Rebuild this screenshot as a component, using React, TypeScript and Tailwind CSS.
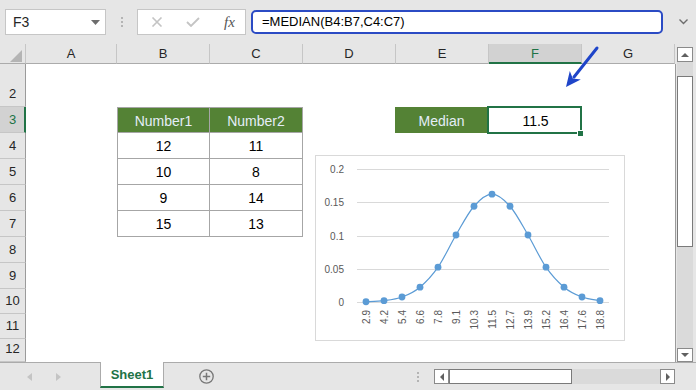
import React from 'react'

const cols = [
  { id: 'A', w: 'w-[91px]' },
  { id: 'B', w: 'w-[93px]' },
  { id: 'C', w: 'w-[93px]' },
  { id: 'D', w: 'w-[93px]' },
  { id: 'E', w: 'w-[93px]' },
  { id: 'F', w: 'w-[93px]' },
  { id: 'G', w: 'w-[93px]' },
]

const rows = [
  { n: 2, h: 'h-[43px]' },
  { n: 3, h: 'h-[26px]' },
  { n: 4, h: 'h-[26px]' },
  { n: 5, h: 'h-[26px]' },
  { n: 6, h: 'h-[26px]' },
  { n: 7, h: 'h-[26px]' },
  { n: 8, h: 'h-[26px]' },
  { n: 9, h: 'h-[26px]' },
  { n: 10, h: 'h-[25px]' },
  { n: 11, h: 'h-[25px]' },
  { n: 12, h: 'h-[23px]' },
]

const data: Record<number, [string, string]> = {
  4: ['12', '11'],
  5: ['10', '8'],
  6: ['9', '14'],
  7: ['15', '13'],
}

// chart series: normal curve around the median
const xs = [2.9, 4.2, 5.4, 6.6, 7.8, 9.1, 10.3, 11.5, 12.7, 13.9, 15.2, 16.4, 17.6, 18.8]
const sd = 2.46
const pdf = (x: number) => Math.exp(-((x - 11.5) ** 2) / (2 * sd * sd)) / (sd * Math.sqrt(2 * Math.PI))
const yOf = (v: number) => 146 - (v / 0.2) * 133
const pts = xs.map((x, i) => [50 + i * 18, yOf(pdf(x))])

function smoothPath(p: number[][]) {
  let d = `M${p[0][0]} ${p[0][1]}`
  for (let i = 0; i < p.length - 1; i++) {
    const p0 = p[i - 1] || p[i]
    const p1 = p[i]
    const p2 = p[i + 1]
    const p3 = p[i + 2] || p2
    const c1x = p1[0] + (p2[0] - p0[0]) / 6
    const c1y = p1[1] + (p2[1] - p0[1]) / 6
    const c2x = p2[0] - (p3[0] - p1[0]) / 6
    const c2y = p2[1] - (p3[1] - p1[1]) / 6
    d += ` C${c1x} ${c1y} ${c2x} ${c2y} ${p2[0]} ${p2[1]}`
  }
  return d
}

const ticks = [
  { v: 0.2, label: '0.2' },
  { v: 0.15, label: '0.15' },
  { v: 0.1, label: '0.1' },
  { v: 0.05, label: '0.05' },
  { v: 0, label: '0' },
]

function Chart() {
  return (
    <div className="absolute left-[315px] top-[91px] h-[186px] w-[310px] border border-[#d9d9d9] bg-white">
      <svg width="308" height="184" fontFamily="Liberation Sans, Arial, sans-serif">
        {ticks.map((t) => {
          const y = Math.round(yOf(t.v)) + 0.5
          return (
            <g key={t.label}>
              <line x1="41" x2="293" y1={y} y2={y} stroke="#d9d9d9" strokeWidth="1" />
              <text x="28" y={y + 3.5} fontSize="10" fill="#595959" textAnchor="end">
                {t.label}
              </text>
            </g>
          )
        })}
        <path d={smoothPath(pts)} fill="none" stroke="#5b9bd5" strokeWidth="1.2" />
        {pts.map(([x, y], i) => (
          <circle key={i} cx={x} cy={y} r="3.4" fill="#5b9bd5" />
        ))}
        {xs.map((x, i) => (
          <text
            key={x}
            transform={`translate(${50 + i * 18 + 3.8} 154) rotate(-90)`}
            fontSize="10"
            fill="#595959"
            textAnchor="end"
          >
            {x.toFixed(1)}
          </text>
        ))}
      </svg>
    </div>
  )
}

function Cell({ row, col, w }: { row: number; col: string; w: string }) {
  const base = `${w} h-full shrink-0 flex items-center justify-center text-[14px]`
  if (row === 3 && (col === 'B' || col === 'C')) {
    return (
      <div
        className={`${base} border-t border-r border-b border-[#a6a6a6] bg-[#548235] pt-[2px] text-[#e4eef8] ${
          col === 'B' ? 'border-l' : ''
        }`}
      >
        {col === 'B' ? 'Number1' : 'Number2'}
      </div>
    )
  }
  if (data[row] && (col === 'B' || col === 'C')) {
    return (
      <div className={`${base} border-r border-b border-[#a6a6a6] pt-[2px] text-black ${col === 'B' ? 'border-l' : ''}`}>
        {col === 'B' ? data[row][0] : data[row][1]}
      </div>
    )
  }
  if (row === 3 && col === 'E') {
    return <div className={`${base} -ml-[1px] bg-[#548235] pt-[2px] text-[#e4eef8]`}>Median</div>
  }
  if (row === 3 && col === 'F') {
    return (
      <div className={`${base} relative ml-[1px] pt-[2px] text-black`}>
        11.5
        <div className="absolute -left-[2px] -top-[1px] h-[28px] w-[95px] border-2 border-[#217346]" />
        <div className="absolute left-[88px] top-[23px] h-[7px] w-[7px] border border-white bg-[#217346]" />
      </div>
    )
  }
  return <div className={base} />
}

function ScrollBtn({ dir }: { dir: 'up' | 'down' | 'left' | 'right' }) {
  const shape = {
    up: 'M0 4L4 0L8 4Z',
    down: 'M0 0L8 0L4 4Z',
    left: 'M4 0L4 8L0 4Z',
    right: 'M0 0L4 4L0 8Z',
  }[dir]
  const vertical = dir === 'up' || dir === 'down'
  return (
    <svg width={vertical ? 8 : 4} height={vertical ? 4 : 8}>
      <path d={shape} fill="#606060" />
    </svg>
  )
}

export default function App() {
  return (
    <div className="relative h-[390px] w-[696px] overflow-hidden bg-[#e6e6e6] font-['Liberation_Sans',Arial,sans-serif] text-[#262626]">
      {/* formula bar */}
      <div className="flex h-[44px] items-start">
        <div className="ml-[5px] mt-[9px] flex h-[26px] w-[101px] items-center justify-between border border-[#c6c6c6] bg-white pl-[7px] pr-[5px] text-[14px]">
          <span>F3</span>
          <svg width="9" height="5">
            <path d="M0 0H9L4.5 5Z" fill="#6d6d6d" />
          </svg>
        </div>
        <div className="ml-[15px] mt-[17px] flex flex-col gap-[2px]">
          <span className="h-[2px] w-[2px] bg-[#b4b4b4]" />
          <span className="h-[2px] w-[2px] bg-[#b4b4b4]" />
          <span className="h-[2px] w-[2px] bg-[#b4b4b4]" />
        </div>
        <div className="ml-[14px] mt-[9px] flex h-[26px] w-[109px] items-center border border-[#c6c6c6] bg-white">
          <svg className="ml-[13px]" width="12" height="10">
            <path d="M1.5 0.5L10.5 9.5M10.5 0.5L1.5 9.5" stroke="#c4c4c4" strokeWidth="1.6" />
          </svg>
          <svg className="ml-[23px]" width="14" height="10">
            <path d="M1 5L5 9L13 1" stroke="#c4c4c4" strokeWidth="1.8" fill="none" />
          </svg>
          <span className="ml-[24px] font-['Liberation_Serif',serif] text-[15px] italic text-[#555]">fx</span>
        </div>
        <div className="ml-[5px] mt-[10px] flex h-[24px] w-[412px] items-center rounded-[5px] border-2 border-[#2b4bc4] bg-white pl-[9px] text-[13px] text-black">
          =MEDIAN(B4:B7,C4:C7)
        </div>
        <svg className="ml-[16px] mt-[19px]" width="9" height="6">
          <path d="M0.5 0.5L4.5 4.5L8.5 0.5" stroke="#6d6d6d" strokeWidth="1.4" fill="none" />
        </svg>
      </div>

      <div className="flex h-[318px]">
        {/* sheet */}
        <div className="flex w-[676px] flex-col">
          <div className="flex h-[20px]">
            <div className="flex w-[26px] shrink-0 items-end justify-end border-r border-b border-r-[#c6c6c6] border-b-[#ababab] pb-[1px] pr-[3px]">
              <svg width="12" height="12">
                <path d="M12 0V12H0Z" fill="#b4b4b4" />
              </svg>
            </div>
            {cols.map((c) =>
              c.id === 'F' ? (
                <div
                  key={c.id}
                  className={`${c.w} flex shrink-0 items-center justify-center border-r border-b-2 border-r-[#c6c6c6] border-b-[#217346] bg-[#d2d2d2] pt-[2px] text-[13px] text-[#217346]`}
                >
                  {c.id}
                </div>
              ) : (
                <div
                  key={c.id}
                  className={`${c.w} flex shrink-0 items-center justify-center border-r border-b border-r-[#c6c6c6] border-b-[#ababab] text-[13px]`}
                >
                  {c.id}
                </div>
              )
            )}
          </div>
          <div className="relative flex flex-1 flex-col border-r border-[#9b9b9b] bg-white">
            {rows.map((r) => (
              <div key={r.n} className={`flex ${r.h}`}>
                {r.n === 3 ? (
                  <div className="flex w-[26px] shrink-0 items-end justify-center border-r-2 border-b border-r-[#217346] border-b-[#c6c6c6] bg-[#d2d2d2] pb-[3px] pl-[1px] text-[13px] text-[#217346]">
                    {r.n}
                  </div>
                ) : (
                  <div className="flex w-[26px] shrink-0 items-end justify-center border-r border-b border-r-[#9b9b9b] border-b-[#c6c6c6] bg-[#e6e6e6] pb-[3px] text-[13px]">
                    {r.n}
                  </div>
                )}
                {cols.map((c) => (
                  <Cell key={c.id} row={r.n} col={c.id} w={c.w} />
                ))}
              </div>
            ))}
            <Chart />
          </div>
        </div>

        {/* vertical scrollbar */}
        <div className="ml-[1px] flex w-[16px] flex-col pt-[3px]">
          <div className="flex h-[15px] items-center justify-center border border-[#8a8a8a] bg-white">
            <ScrollBtn dir="up" />
          </div>
          <div className="flex-1 bg-[#dadada] pt-[14px]">
            <div className="h-[171px] border border-[#7a7a7a] bg-white" />
          </div>
          <div className="flex h-[14px] items-center justify-center border border-[#8a8a8a] bg-white">
            <ScrollBtn dir="down" />
          </div>
        </div>
      </div>

      {/* sheet tabs */}
      <div className="flex h-[28px]">
        <div className="flex w-[100px] items-center border-t border-[#ababab] pl-[27px]">
          <svg width="5" height="8">
            <path d="M5 0V8L0 4Z" fill="#c4c4c4" />
          </svg>
          <svg className="ml-[24px]" width="5" height="8">
            <path d="M0 0V8L5 4Z" fill="#c4c4c4" />
          </svg>
        </div>
        <div className="flex h-[26px] w-[64px] items-center justify-center border-x border-b-2 border-x-[#ababab] border-b-[#217346] bg-white pt-[1px] text-[13px] font-bold text-[#217346]">
          Sheet1
        </div>
        <div className="flex flex-1 items-center border-t border-[#ababab]">
          <svg className="ml-[35px]" width="15" height="15">
            <circle cx="7.5" cy="7.5" r="6.7" fill="none" stroke="#777" strokeWidth="1.3" />
            <path d="M7.5 3.8V11.2M3.8 7.5H11.2" stroke="#777" strokeWidth="1.5" />
          </svg>
          <div className="ml-[203px] flex flex-col gap-[2px]">
            <span className="h-[2px] w-[2px] bg-[#b4b4b4]" />
            <span className="h-[2px] w-[2px] bg-[#b4b4b4]" />
            <span className="h-[2px] w-[2px] bg-[#b4b4b4]" />
          </div>
          <div className="ml-[15px] flex h-[15px] w-[241px]">
            <div className="flex w-[15px] items-center justify-center border border-[#8a8a8a] bg-white">
              <ScrollBtn dir="left" />
            </div>
            <div className="w-[123px] border border-[#7a7a7a] bg-white" />
            <div className="flex-1 bg-[#dadada]" />
            <div className="flex w-[15px] items-center justify-center border border-[#8a8a8a] bg-white">
              <ScrollBtn dir="right" />
            </div>
          </div>
        </div>
      </div>

      {/* annotation arrow */}
      <svg className="absolute left-[560px] top-[42px]" width="42" height="50">
        <path d="M37 6L14 35" stroke="#1f45c9" strokeWidth="3" strokeLinecap="round" />
        <path d="M6 45L20.8 37.6L12.8 36.4L9.8 28.9Z" fill="#1f45c9" />
      </svg>
    </div>
  )
}
